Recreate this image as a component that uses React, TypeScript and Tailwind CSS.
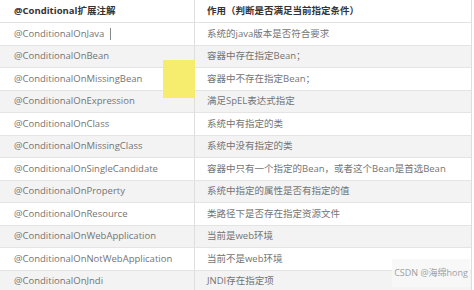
import React from 'react';

const rows: [string, string][] = [
  ['@ConditionalOnJava', '系统的java版本是否符合要求'],
  ['@ConditionalOnBean', '容器中存在指定Bean；'],
  ['@ConditionalOnMissingBean', '容器中不存在指定Bean；'],
  ['@ConditionalOnExpression', '满足SpEL表达式指定'],
  ['@ConditionalOnClass', '系统中有指定的类'],
  ['@ConditionalOnMissingClass', '系统中没有指定的类'],
  ['@ConditionalOnSingleCandidate', '容器中只有一个指定的Bean，或者这个Bean是首选Bean'],
  ['@ConditionalOnProperty', '系统中指定的属性是否有指定的值'],
  ['@ConditionalOnResource', '类路径下是否存在指定资源文件'],
  ['@ConditionalOnWebApplication', '当前是web环境'],
  ['@ConditionalOnNotWebApplication', '当前不是web环境'],
  ['@ConditionalOnJndi', 'JNDI存在指定项'],
];

const font = { fontFamily: '"Open Sans", "Noto Sans CJK SC", sans-serif' };

export default function App() {
  return (
    <div className="relative w-[474px] h-[290px] overflow-hidden bg-white" style={font}>
      <div className="w-[472px] border-r border-[#dedede]">
        {/* header */}
        <div className="flex h-[23px] items-center border-b border-[#e2e2e2] bg-white text-[9.5px] font-bold text-[#333]">
          <div className="w-[195px] shrink-0 pl-[14px] border-r border-[#dedede] h-full flex items-center">@Conditional扩展注解</div>
          <div className="pl-[12px]">作用（判断是否满足当前指定条件）</div>
        </div>
        {rows.map(([name, desc], i) => (
          <div
            key={name}
            className={`flex h-[22.5px] items-center border-b border-[#e4e4e4] text-[9.5px] text-[#747474] ${i % 2 === 1 ? 'bg-[#f3f3f3]' : 'bg-white'}`}
          >
            <div className="w-[195px] shrink-0 pl-[14px] border-r border-[#dedede] h-full flex items-center">
              {name}
              {i === 0 && <span className="ml-[6px] inline-block w-px h-[12px] bg-[#888]" />}
            </div>
            <div className="pl-[12px] whitespace-nowrap">{desc}</div>
          </div>
        ))}
      </div>
      {/* yellow sticky square */}
      <div className="absolute left-[163px] top-[60px] w-[32px] h-[38px] bg-[#f6ed6e]" />
      {/* watermark */}
      <div className="absolute left-[392px] top-[259px] w-[78px] h-[28px] bg-[#f7f7f7]/90 flex items-center justify-center text-[9px] text-[#a0a0a0]">
        CSDN @海绵hong
      </div>
    </div>
  );
}
